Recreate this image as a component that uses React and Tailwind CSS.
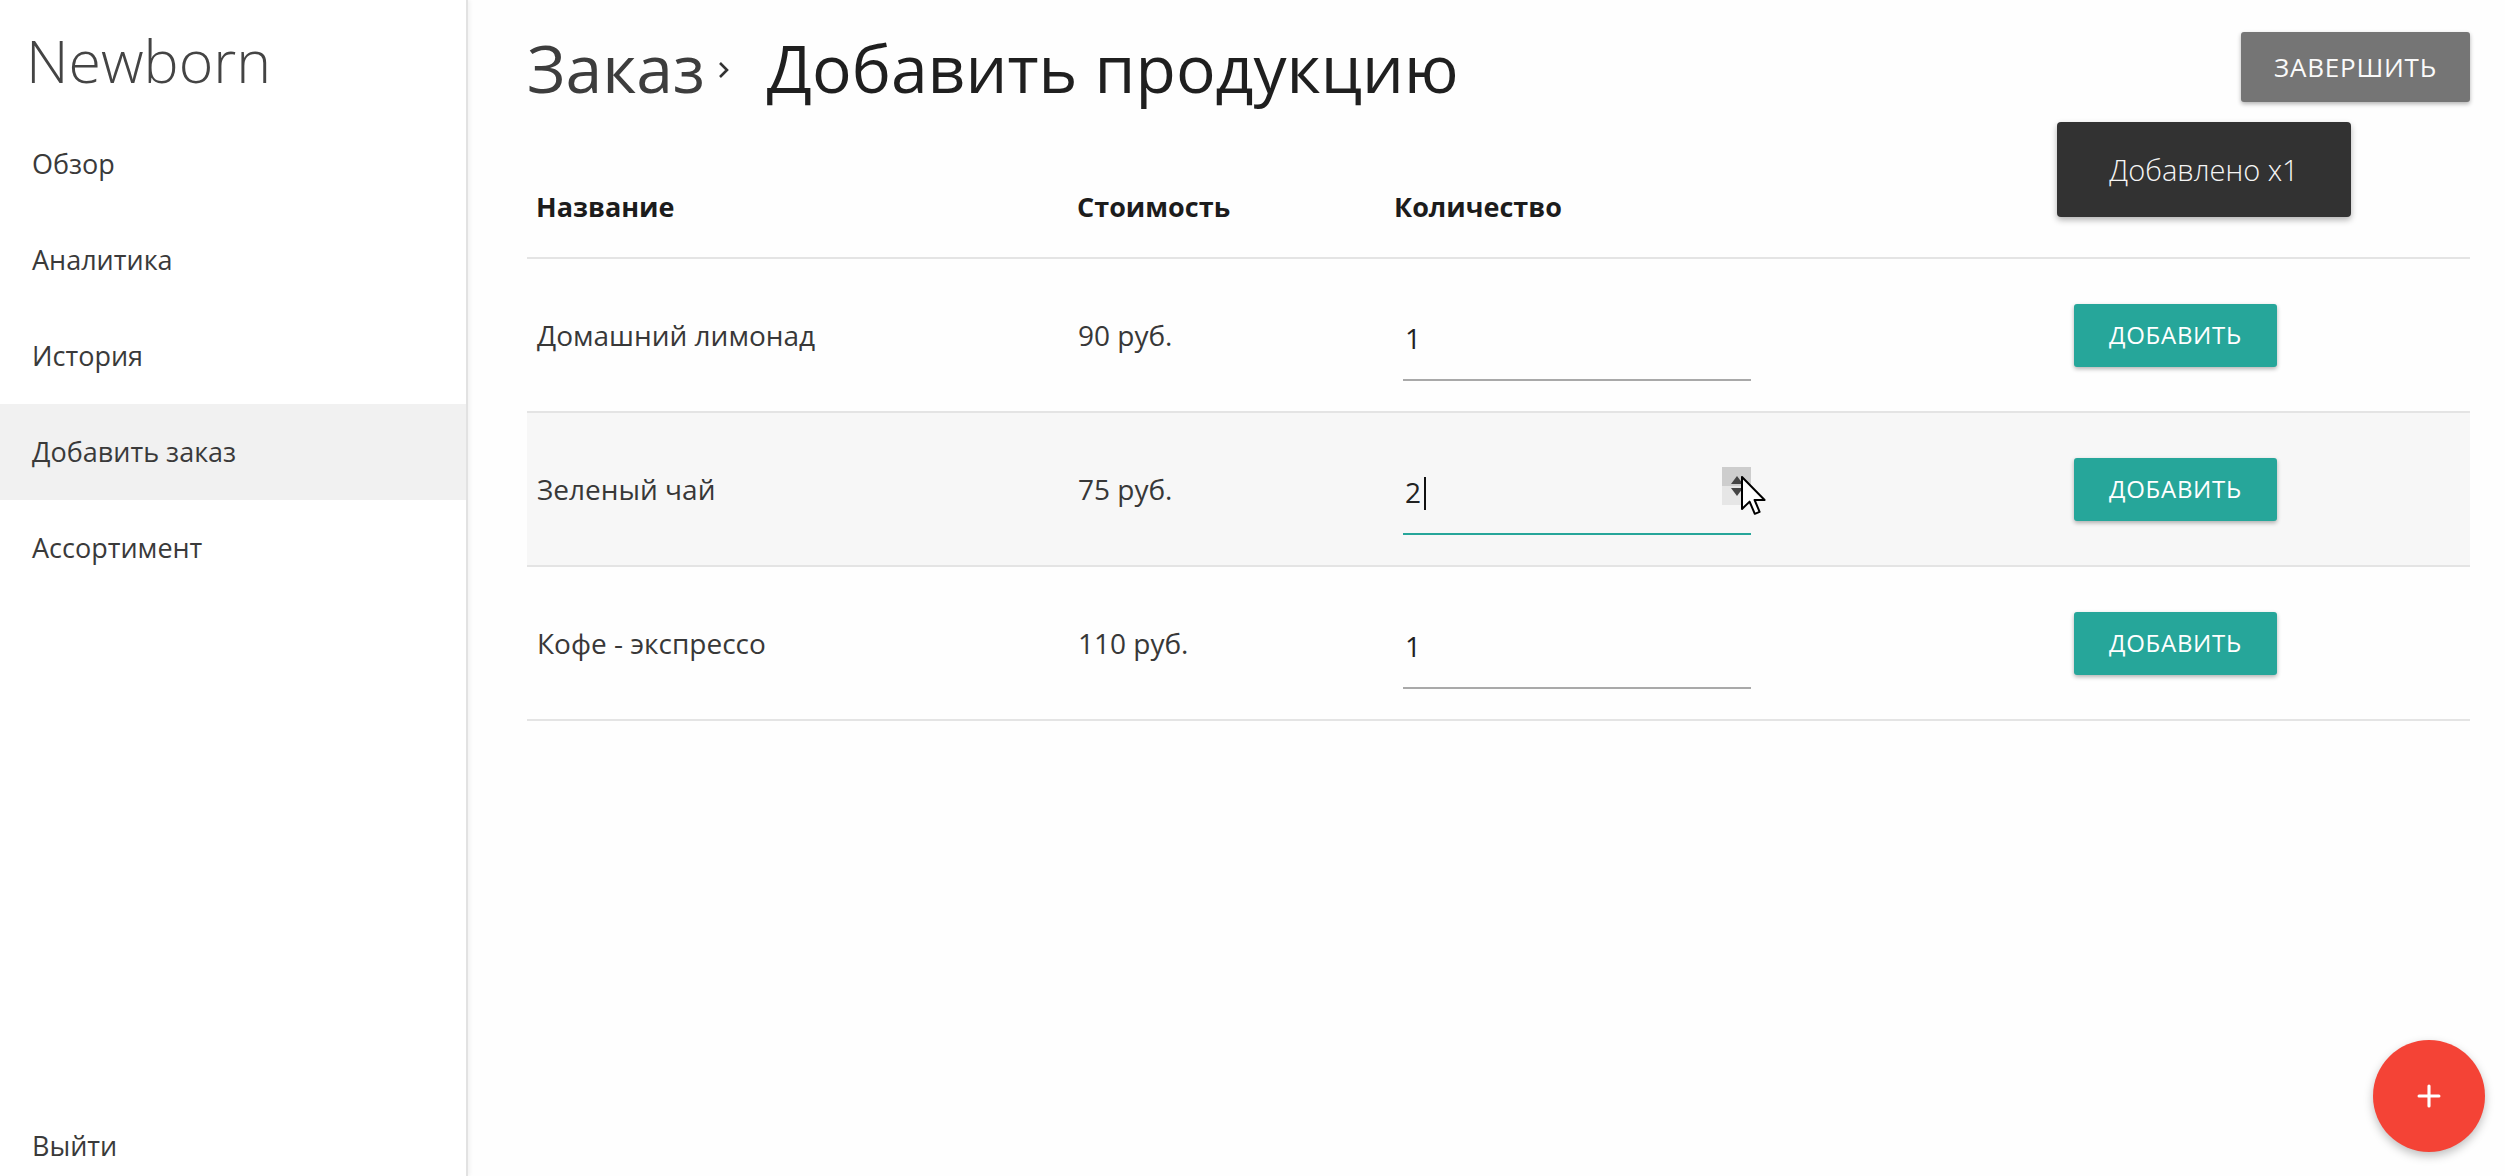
import { Plus } from "lucide-react";

const menu = ["Обзор", "Аналитика", "История", "Добавить заказ", "Ассортимент"];

const rows = [
  { name: "Домашний лимонад", price: "90 руб.", qty: "1" },
  { name: "Зеленый чай", price: "75 руб.", qty: "2", active: true },
  { name: "Кофе - экспрессо", price: "110 руб.", qty: "1" },
];

function QtyInput({ value, active }) {
  return (
    <div
      className={`relative w-[348px] pt-[29px] pb-[21px] leading-[40px] text-[28px] text-[#222] border-b-2 ${
        active ? "border-[#26a69a]" : "border-[#a9a9a9]"
      }`}
    >
      <span className="pl-[2px]">{value}</span>
      {active && (
        <>
          <span className="inline-block w-[2px] h-[33px] bg-[#111] align-middle ml-[3px] -mt-[4px]" />
          {/* number spinner */}
          <div className="absolute left-[319px] top-[24px] w-[29px] h-[38px] flex flex-col">
            <div className="h-[19px] bg-[#cdcdcd] flex items-end justify-center pb-[2px]">
              <svg width="12" height="8" viewBox="0 0 12 8">
                <path d="M6 0 L12 8 L0 8 Z" fill="#444" />
              </svg>
            </div>
            <div className="h-[19px] bg-[#e6e6e6] flex items-start justify-center pt-[2px]">
              <svg width="12" height="8" viewBox="0 0 12 8">
                <path d="M0 0 L12 0 L6 8 Z" fill="#444" />
              </svg>
            </div>
          </div>
          {/* mouse pointer */}
          <svg className="absolute left-[338px] top-[33px]" width="26" height="40" viewBox="0 0 13 20">
            <path
              d="M0.5 0.5 L0.5 16.5 L4.3 12.8 L6.9 18.9 L9.3 17.9 L6.8 12 L11.8 12 Z"
              fill="#fff"
              stroke="#000"
              strokeWidth="1"
              strokeLinejoin="round"
            />
          </svg>
        </>
      )}
    </div>
  );
}

export default function App() {
  return (
    <div className="flex h-[1176px] w-full overflow-hidden bg-white font-[family-name:'Open_Sans','Noto_Sans',sans-serif]">
      {/* Sidebar */}
      <aside className="w-[468px] shrink-0 h-full flex flex-col bg-white border-r-2 border-[#e2e2e2] shadow-[2px_0_4px_rgba(0,0,0,0.05)] z-10">
        <div className="h-[116px] pl-[26px] pt-[31px]">
          <div className="text-[59px] leading-[59px] font-light text-[#444]">Newborn</div>
        </div>
        <nav className="flex flex-col">
          {menu.map((m) => (
            <div
              key={m}
              className={`h-[96px] flex items-center pl-[32px] text-[27px] font-medium text-[#3a3a3a] ${
                m === "Добавить заказ" ? "bg-[#f1f1f1]" : ""
              }`}
            >
              {m}
            </div>
          ))}
        </nav>
        <div className="mt-auto pl-[32px] pb-[15px] text-[27px] leading-[30px] font-medium text-[#3a3a3a]">Выйти</div>
      </aside>

      {/* Main */}
      <main className="relative flex-1 pl-[59px] pr-[35px] bg-[#fefefe]">
        <div className="h-[157px] pt-[32px] flex items-start justify-between">
          <h1 className="mt-[2px] flex items-center leading-[66px] text-[66px] font-normal">
            <span className="text-[#3d3d3d]">Заказ</span>
            <svg className="ml-[12px] mt-[6px]" width="14" height="18" viewBox="0 0 14 18">
              <path d="M3 2 L10 9 L3 16" fill="none" stroke="#333" strokeWidth="2.6" />
            </svg>
            <span className="ml-[36px] text-[#1f1f1f]">Добавить продукцию</span>
          </h1>
          <button className="w-[229px] h-[70px] rounded-[3px] bg-[#757575] text-[#fafafa] text-[26px] font-medium tracking-[0.03em] shadow-[0_2px_4px_rgba(0,0,0,0.3)]">
            ЗАВЕРШИТЬ
          </button>
        </div>

        {/* Table */}
        <div className="h-[102px] flex items-center pl-[9px] text-[27px] font-bold text-[#1c1c1c] border-b-2 border-[#e4e4e4]">
          <div className="w-[541px]">Название</div>
          <div className="w-[317px]">Стоимость</div>
          <div>Количество</div>
        </div>
        {rows.map((r) => (
          <div
            key={r.name}
            className={`h-[154px] flex items-center pl-[10px] border-b-2 border-[#e4e4e4] text-[28px] text-[#383838] ${
              r.active ? "bg-[#f7f7f7]" : ""
            }`}
          >
            <div className="w-[541px]">{r.name}</div>
            <div className="w-[325px]">{r.price}</div>
            <div className="w-[671px]">
              <QtyInput value={r.qty} active={r.active} />
            </div>
            <button className="w-[203px] h-[63px] rounded-[3px] bg-[#26a69a] text-white text-[24px] font-medium tracking-[0.03em] shadow-[0_2px_4px_rgba(0,0,0,0.3)]">
              ДОБАВИТЬ
            </button>
          </div>
        ))}

        {/* Toast */}
        <div className="absolute right-[154px] top-[122px] w-[294px] h-[95px] rounded-[4px] bg-[#323232] flex items-center justify-center text-[29px] font-light text-[#f5f5f5] shadow-[0_3px_6px_rgba(0,0,0,0.3)]">
          Добавлено x1
        </div>

        {/* FAB */}
        <button className="absolute right-[20px] bottom-[24px] w-[112px] h-[112px] rounded-full bg-[#f44336] flex items-center justify-center shadow-[0_4px_10px_rgba(0,0,0,0.25)]">
          <Plus size={34} color="#fff" strokeWidth={2.2} />
        </button>
      </main>
    </div>
  );
}
